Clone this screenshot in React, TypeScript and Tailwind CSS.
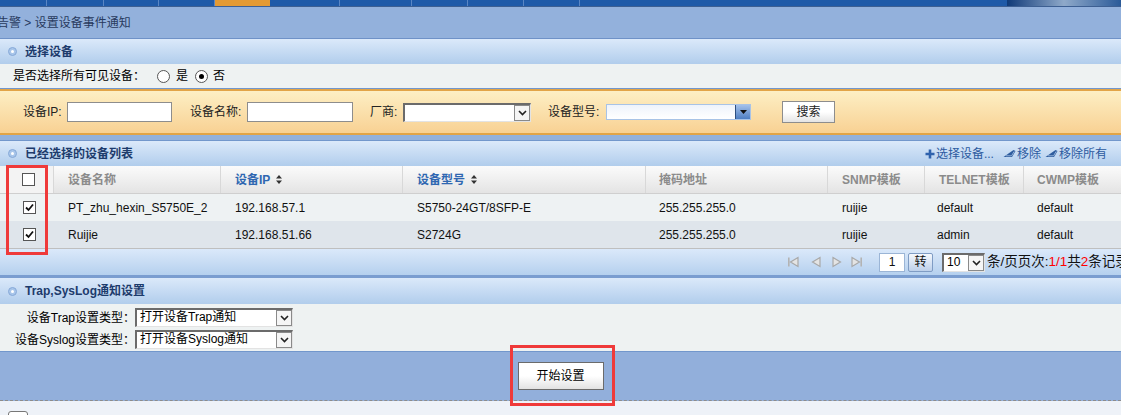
import React from "react";

const tabs = [47, 57, 55, 56, 55, 70, 72, 56, 56, 56];

function Bullet() {
  return (
    <span className="flex h-[9px] w-[9px] items-center justify-center rounded-full border border-[#86a9d8] bg-[#a9c6ea]">
      <span className="h-[3px] w-[3px] rounded-full bg-white" />
    </span>
  );
}

function SectionHeader({ title, h = "h-[25px]", children }: { title: string; h?: string; children?: React.ReactNode }) {
  return (
    <div className={`flex ${h} items-center bg-gradient-to-b from-[#dbe9fa] to-[#b1cdec] pl-[8px] pr-[14px]`}>
      <Bullet />
      <span className="ml-[8px] text-[12px] font-bold text-[#1d3b6c]">{title}</span>
      <div className="ml-auto flex items-center">{children}</div>
    </div>
  );
}

function Check({ checked }: { checked?: boolean }) {
  return (
    <span className="flex h-[13px] w-[13px] items-center justify-center border border-[#555] bg-white">
      {checked && (
        <svg width="9" height="9" viewBox="0 0 9 9">
          <path d="M1 4.5 L3.5 7 L8 1.5" fill="none" stroke="#111" strokeWidth="1.8" />
        </svg>
      )}
    </span>
  );
}

function Chevron() {
  return (
    <svg width="9" height="6" viewBox="0 0 9 6">
      <path d="M1 1 L4.5 4.5 L8 1" fill="none" stroke="#222" strokeWidth="1.6" />
    </svg>
  );
}

function ClassicSelect({ width, value }: { width: string; value?: string }) {
  return (
    <div className={`flex h-[19px] shrink-0 ${width} border-l-2 border-t-2 border-[#6b6b6b] border-r border-b border-r-[#e3e3e3] border-b-[#e3e3e3] bg-white`}>
      <div className="flex-1 truncate pl-[3px] text-[12px] leading-[15px] text-black">{value}</div>
      <div className="flex w-[16px] items-center justify-center border border-[#8a8a8a] bg-[#f5f5f5]">
        <Chevron />
      </div>
    </div>
  );
}

function SortIcon() {
  return (
    <svg width="6" height="9" viewBox="0 0 6 9" className="ml-[6px]">
      <path d="M3 0 L6 3.5 L0 3.5 Z M3 9 L6 5.5 L0 5.5 Z" fill="#333" />
    </svg>
  );
}

function PlusIcon() {
  return (
    <svg width="10" height="10" viewBox="0 0 10 10" className="mr-[1px]">
      <path d="M5 0.5 V9.5 M0.5 5 H9.5" stroke="#2f62ad" strokeWidth="2.6" />
    </svg>
  );
}

function RemoveIcon() {
  return (
    <svg width="13" height="9" viewBox="0 0 13 9" className="mr-[1px]">
      <path d="M0.5 8 L9 8 L12.5 2 L10.5 1 Z" fill="#2f5d9e" />
      <path d="M3 6.8 L8.6 6.8 L11.2 2.4" fill="none" stroke="#9fbbe0" strokeWidth="0.9" />
    </svg>
  );
}

function PageIcon({ kind }: { kind: "first" | "prev" | "next" | "last" }) {
  const tri =
    kind === "first" || kind === "prev" ? "M11 1.5 L3.5 6 L11 10.5 Z" : "M2 1.5 L9.5 6 L2 10.5 Z";
  return (
    <svg width="13" height="12" viewBox="0 0 13 12" className="shrink-0">
      {kind === "first" && <rect x="1" y="1.5" width="1.6" height="9" fill="#b3b3b3" />}
      {kind === "last" && <rect x="10.4" y="1.5" width="1.6" height="9" fill="#b3b3b3" />}
      <path d={tri} fill="#e4e4e4" stroke="#a8a8a8" strokeWidth="1.2" />
    </svg>
  );
}

const cols = "grid grid-cols-[54px_167px_182px_243px_182px_97px_99px_1fr]";

const rows = [
  { name: "PT_zhu_hexin_S5750E_2", ip: "192.168.57.1", model: "S5750-24GT/8SFP-E", mask: "255.255.255.0", snmp: "ruijie", telnet: "default", cwmp: "default", bg: "bg-[#eef2f3]" },
  { name: "Ruijie", ip: "192.168.51.66", model: "S2724G", mask: "255.255.255.0", snmp: "ruijie", telnet: "admin", cwmp: "default", bg: "bg-[#dfe5eb]" },
];

export default function App() {
  return (
    <div className="relative h-[415px] w-[1121px] overflow-hidden bg-[#92b0dc] font-['Liberation_Sans','Noto_Sans_CJK_SC',sans-serif] text-[12px] text-[#222]">
      {/* top nav strip */}
      <div className="flex h-[7px] border-b border-[#3d5f92] bg-[#1f5aa8]">
        {tabs.map((w, i) => (
          <div
            key={i}
            style={{ width: w }}
            className={i === 4 ? "bg-[#e49a33]" : "border-r border-[#5a86c4]"}
          />
        ))}
        <div className="flex-1" />
        <div className="w-[114px] bg-gradient-to-r from-[#0f3a78] via-[#8fa9c9] to-[#2a5a98]" />
      </div>

      {/* breadcrumb */}
      <div className="flex h-[32px] items-center border-b border-[#6f92c8] bg-[#93b1dc] pl-0 text-[12px] text-[#283a5e]">
        <span className="-ml-[3px]">告警 &gt; 设置设备事件通知</span>
      </div>

      <SectionHeader title="选择设备" />
      <div className="flex h-[25px] items-center border-b border-[#7297cc] bg-[#eef2f2] pl-[13px] text-[12px] text-black">
        <span>是否选择所有可见设备：</span>
        <span className="ml-[12px] h-[13px] w-[13px] rounded-full border border-[#555] bg-white" />
        <span className="ml-[6px]">是</span>
        <span className="ml-[7px] flex h-[13px] w-[13px] items-center justify-center rounded-full border border-[#555] bg-white">
          <span className="h-[5px] w-[5px] rounded-full bg-black" />
        </span>
        <span className="ml-[5px]">否</span>
      </div>

      {/* search bar */}
      <div className="flex h-[46px] items-center border-y-2 border-[#e2a447] bg-gradient-to-b from-[#fdefc4] to-[#f8d193] pl-[23px] text-[12px] text-[#222]">
        <span className="w-[44px] whitespace-nowrap">设备IP:</span>
        <div className="h-[20px] w-[105px] border border-[#8d8d8d] bg-white" />
        <span className="ml-[18px] w-[57px] whitespace-nowrap">设备名称:</span>
        <div className="h-[20px] w-[106px] border border-[#8d8d8d] bg-white" />
        <span className="ml-[17px] w-[33px] whitespace-nowrap">厂商:</span>
        <ClassicSelect width="w-[128px]" />
        <span className="ml-[17px] w-[58px] whitespace-nowrap">设备型号:</span>
        <div className="flex h-[16px] w-[145px] border border-[#a8c3e6] bg-gradient-to-b from-[#eef3fb] to-white">
          <div className="flex-1" />
          <div className="flex w-[15px] items-center justify-center border-l border-[#2d4f80] bg-gradient-to-b from-[#a4c1ea] to-[#4e7ec2]">
            <svg width="7" height="4" viewBox="0 0 7 4">
              <path d="M0 0 L7 0 L3.5 4 Z" fill="#111" />
            </svg>
          </div>
        </div>
        <div className="ml-[31px] flex h-[22px] w-[53px] items-center justify-center border border-[#8d8d8d] bg-gradient-to-b from-white via-white to-[#e4e4e4] text-[12px]">
          搜索
        </div>
      </div>

      <div className="h-[6px] border-b border-[#7297cc] bg-[#93b1dc]" />

      <SectionHeader title="已经选择的设备列表">
        <span className="flex items-center text-[12px] text-[#2c5aa0]">
          <PlusIcon />
          选择设备...
        </span>
        <span className="ml-[9px] flex items-center text-[#2c5aa0]">
          <RemoveIcon />
          移除
        </span>
        <span className="ml-[4px] flex items-center text-[#2c5aa0]">
          <RemoveIcon />
          移除所有
        </span>
      </SectionHeader>

      {/* table */}
      <div className={`${cols} h-[28px] border-b border-[#cfcfcf] bg-gradient-to-b from-[#fbfbfb] to-[#e4e4e4] text-[12px] font-bold`}>
        <div className="flex items-center justify-center border-r border-[#d8d8d8] bg-[#f3f3f3] pl-[4px]">
          <Check />
        </div>
        <div className="flex items-center border-r border-[#d8d8d8] pl-[14px] text-[#8b8b8b]">设备名称</div>
        <div className="flex items-center border-r border-[#d8d8d8] pl-[14px] text-[#2f67b1]">
          设备IP
          <SortIcon />
        </div>
        <div className="flex items-center border-r border-[#d8d8d8] pl-[14px] text-[#2f67b1]">
          设备型号
          <SortIcon />
        </div>
        <div className="flex items-center border-r border-[#d8d8d8] pl-[13px] text-[#8b8b8b]">掩码地址</div>
        <div className="flex items-center border-r border-[#d8d8d8] pl-[14px] text-[#8b8b8b]">SNMP模板</div>
        <div className="flex items-center border-r border-[#d8d8d8] pl-[14px] text-[#8b8b8b]">TELNET模板</div>
        <div className="flex items-center pl-[13px] text-[#8b8b8b]">CWMP模板</div>
      </div>
      {rows.map((r) => (
        <div key={r.name} className={`${cols} h-[27px] ${r.bg} text-[12px] text-[#111]`}>
          <div className="flex items-center justify-center pl-[4px]">
            <Check checked />
          </div>
          <div className="flex items-center pl-[14px]">{r.name}</div>
          <div className="flex items-center pl-[14px]">{r.ip}</div>
          <div className="flex items-center pl-[14px]">{r.model}</div>
          <div className="flex items-center pl-[13px]">{r.mask}</div>
          <div className="flex items-center pl-[14px]">{r.snmp}</div>
          <div className="flex items-center pl-[12px]">{r.telnet}</div>
          <div className="flex items-center pl-[13px]">{r.cwmp}</div>
        </div>
      ))}

      {/* pagination */}
      <div className="flex h-[30px] items-center border-t border-[#bfbfbf] border-b-[3px] border-b-[#7a9dd0] bg-gradient-to-b from-[#dbe9fa] to-[#b5d0ee] pl-[787px] text-[13px] text-[#111]">
        <PageIcon kind="first" />
        <span className="ml-[9px] flex shrink-0"><PageIcon kind="prev" /></span>
        <span className="ml-[9px] flex shrink-0"><PageIcon kind="next" /></span>
        <span className="ml-[6px] flex shrink-0"><PageIcon kind="last" /></span>
        <div className="ml-[16px] flex h-[19px] w-[26px] shrink-0 items-center justify-center border border-[#9bb5d6] bg-white text-[12px]">1</div>
        <div className="ml-[3px] flex h-[19px] w-[25px] shrink-0 items-center justify-center rounded-[2px] border border-[#7f9cc4] bg-gradient-to-b from-[#f4f8fd] to-[#bdd0ea] text-[12px]">
          转
        </div>
        <div className="ml-[9px] shrink-0">
          <ClassicSelect width="w-[43px]" value="10" />
        </div>
        <span className="ml-[2px] shrink-0 whitespace-nowrap text-[13.5px]">
          条/页页次:<span className="text-[#f00]">1/1</span>共<span className="text-[#f00]">2</span>条记录
        </span>
      </div>

      <SectionHeader title="Trap,SysLog通知设置" h="h-[26px]" />
      <div className="flex flex-col gap-[3px] border-b border-[#7297cc] bg-[#eef2f2] pb-[2px] pt-[4px] text-[12px] text-black">
        <div className="flex h-[19px] items-center">
          <span className="w-[135px] text-right">设备Trap设置类型：</span>
          <ClassicSelect width="w-[158px]" value="打开设备Trap通知" />
        </div>
        <div className="flex h-[19px] items-center">
          <span className="w-[135px] text-right">设备Syslog设置类型：</span>
          <ClassicSelect width="w-[158px]" value="打开设备Syslog通知" />
        </div>
      </div>

      <div className="flex h-[49px] items-center justify-center border-b border-dashed border-[#8c8c8c] bg-[#92afdb]">
        <div className="flex h-[28px] w-[86px] items-center justify-center border border-[#6b6b6b] bg-gradient-to-b from-white via-white to-[#e2e2e2] text-[12px] text-black">
          开始设置
        </div>
      </div>
      <div className="h-[20px] bg-[#eef2f8] pl-[8px] pt-[10px]">
        <span className="block h-[13px] w-[20px] rounded-[3px] border border-[#777] bg-white" />
      </div>

      {/* red annotation boxes */}
      <div className="absolute left-[6px] top-[165px] h-[90px] w-[42px] border-[3px] border-[#ef3a3a]" />
      <div className="absolute left-[510px] top-[345px] h-[61px] w-[105px] border-[3px] border-[#ef3a3a]" />
    </div>
  );
}
